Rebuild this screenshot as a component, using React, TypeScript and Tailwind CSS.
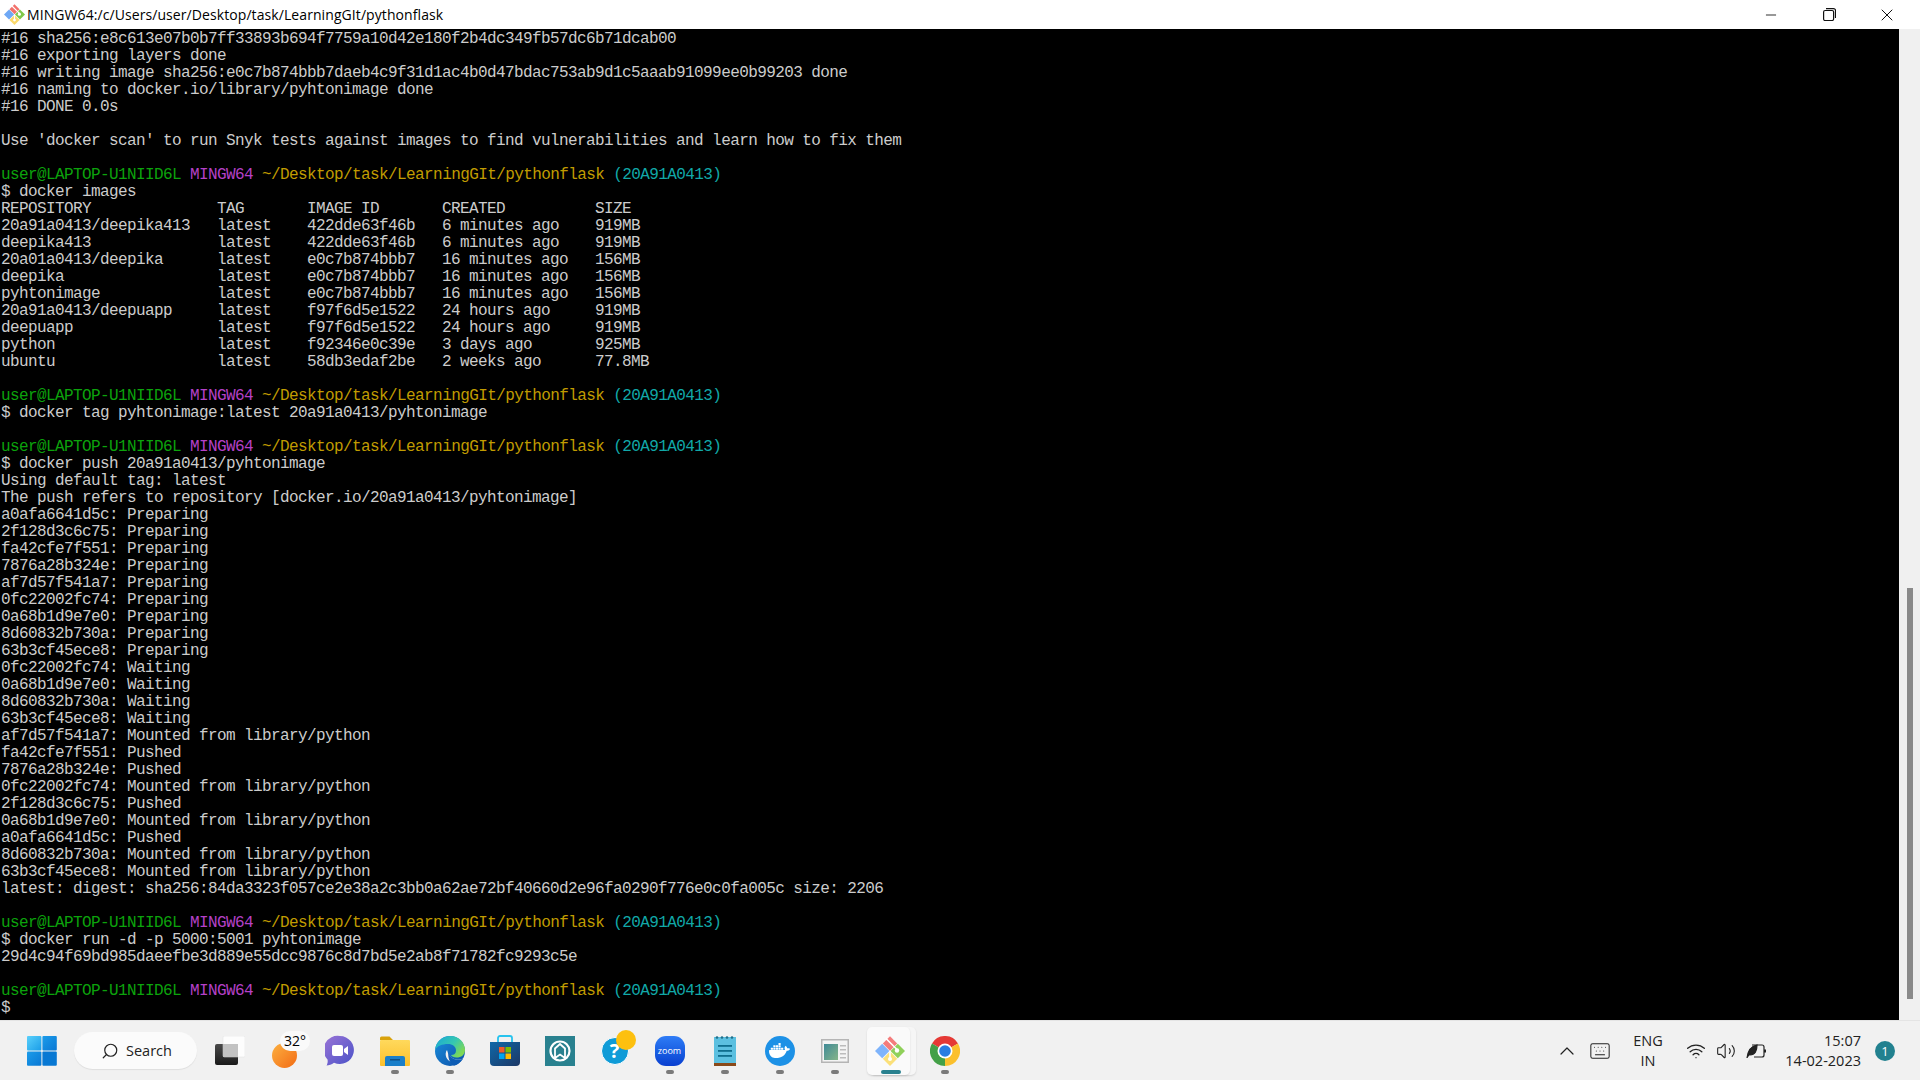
import React from "react";
import { Search, ChevronUp, Wifi, Volume2, Keyboard, Minus, X } from "lucide-react";
import { SiDocker } from "react-icons/si";

const img = (a: string, b: string, c: string, d: string, e: string) =>
  a.padEnd(24) + b.padEnd(10) + c.padEnd(15) + d.padEnd(17) + e;

const PROMPT = "P";
const lines: string[] = [
  "#16 sha256:e8c613e07b0b7ff33893b694f7759a10d42e180f2b4dc349fb57dc6b71dcab00",
  "#16 exporting layers done",
  "#16 writing image sha256:e0c7b874bbb7daeb4c9f31d1ac4b0d47bdac753ab9d1c5aaab91099ee0b99203 done",
  "#16 naming to docker.io/library/pyhtonimage done",
  "#16 DONE 0.0s",
  "",
  "Use 'docker scan' to run Snyk tests against images to find vulnerabilities and learn how to fix them",
  "",
  PROMPT,
  "$ docker images",
  img("REPOSITORY", "TAG", "IMAGE ID", "CREATED", "SIZE"),
  img("20a91a0413/deepika413", "latest", "422dde63f46b", "6 minutes ago", "919MB"),
  img("deepika413", "latest", "422dde63f46b", "6 minutes ago", "919MB"),
  img("20a01a0413/deepika", "latest", "e0c7b874bbb7", "16 minutes ago", "156MB"),
  img("deepika", "latest", "e0c7b874bbb7", "16 minutes ago", "156MB"),
  img("pyhtonimage", "latest", "e0c7b874bbb7", "16 minutes ago", "156MB"),
  img("20a91a0413/deepuapp", "latest", "f97f6d5e1522", "24 hours ago", "919MB"),
  img("deepuapp", "latest", "f97f6d5e1522", "24 hours ago", "919MB"),
  img("python", "latest", "f92346e0c39e", "3 days ago", "925MB"),
  img("ubuntu", "latest", "58db3edaf2be", "2 weeks ago", "77.8MB"),
  "",
  PROMPT,
  "$ docker tag pyhtonimage:latest 20a91a0413/pyhtonimage",
  "",
  PROMPT,
  "$ docker push 20a91a0413/pyhtonimage",
  "Using default tag: latest",
  "The push refers to repository [docker.io/20a91a0413/pyhtonimage]",
  "a0afa6641d5c: Preparing",
  "2f128d3c6c75: Preparing",
  "fa42cfe7f551: Preparing",
  "7876a28b324e: Preparing",
  "af7d57f541a7: Preparing",
  "0fc22002fc74: Preparing",
  "0a68b1d9e7e0: Preparing",
  "8d60832b730a: Preparing",
  "63b3cf45ece8: Preparing",
  "0fc22002fc74: Waiting",
  "0a68b1d9e7e0: Waiting",
  "8d60832b730a: Waiting",
  "63b3cf45ece8: Waiting",
  "af7d57f541a7: Mounted from library/python",
  "fa42cfe7f551: Pushed",
  "7876a28b324e: Pushed",
  "0fc22002fc74: Mounted from library/python",
  "2f128d3c6c75: Pushed",
  "0a68b1d9e7e0: Mounted from library/python",
  "a0afa6641d5c: Pushed",
  "8d60832b730a: Mounted from library/python",
  "63b3cf45ece8: Mounted from library/python",
  "latest: digest: sha256:84da3323f057ce2e38a2c3bb0a62ae72bf40660d2e96fa0290f776e0c0fa005c size: 2206",
  "",
  PROMPT,
  "$ docker run -d -p 5000:5001 pyhtonimage",
  "29d4c94f69bd985daeefbe3d889e55dcc9876c8d7bd5e2ab8f71782fc9293c5e",
  "",
  PROMPT,
  "$",
];

function Prompt() {
  return (
    <>
      <span className="text-[#0ca30c]">user@LAPTOP-U1NIID6L</span>{" "}
      <span className="text-[#b540c8]">MINGW64</span>{" "}
      <span className="text-[#c19c00]">~/Desktop/task/LearningGIt/pythonflask</span>{" "}
      <span className="text-[#11a8a8]">(20A91A0413)</span>
    </>
  );
}

function GitLogo({ size, pastel }: { size: number; pastel?: boolean }) {
  const c = pastel
    ? ["#f47c7c", "#8fd05a", "#fbe07a", "#7fb4fb"]
    : ["#f2706a", "#7fc84a", "#fbd96a", "#6ea8f5"];
  return (
    <svg width={size} height={size} viewBox="0 0 30 30">
      <polygon points="15,0 22.2,7.2 15,14.4 7.8,7.2" fill={c[0]} transform="translate(0 0.3)" />
      <polygon points="22.8,7.8 30,15 22.8,22.2 15.6,15" fill={c[1]} />
      <polygon points="15,15.6 22.2,22.8 15,30 7.8,22.8" fill={c[2]} />
      <polygon points="7.2,7.8 14.4,15 7.2,22.2 0,15" fill={c[3]} />
      <path d="M11 2.5 L22 13.5 M15 15 V23" stroke="#ffffff" strokeWidth="1.6" fill="none" />
      <circle cx="15" cy="23" r="2" fill="#fff" />
      <circle cx="22" cy="14.5" r="2.2" fill="#fff" />
    </svg>
  );
}

function WinLogo() {
  return (
    <svg width="30" height="30" viewBox="0 0 30 30">
      <defs>
        <linearGradient id="wa" x1="0" y1="0" x2="1" y2="1">
          <stop offset="0" stopColor="#5ad0fb" />
          <stop offset="1" stopColor="#1a9de8" />
        </linearGradient>
        <linearGradient id="wb" x1="0" y1="0" x2="1" y2="1">
          <stop offset="0" stopColor="#1b9cea" />
          <stop offset="1" stopColor="#0a78d4" />
        </linearGradient>
      </defs>
      <rect x="0" y="0" width="14.4" height="14.4" rx="1" fill="url(#wa)" />
      <rect x="15.4" y="0" width="14.4" height="14.4" rx="1" fill="url(#wb)" />
      <rect x="0" y="15.4" width="14.4" height="14.4" rx="1" fill="url(#wb)" />
      <rect x="15.4" y="15.4" width="14.4" height="14.4" rx="1" fill="#0878d3" />
    </svg>
  );
}

function TaskView() {
  return (
    <svg width="30" height="30" viewBox="0 0 30 30" className="ml-[1px]">
      <defs>
        <linearGradient id="tv" x1="0" y1="0" x2="0" y2="1">
          <stop offset="0" stopColor="#4a4a4a" />
          <stop offset="1" stopColor="#1a1a1a" />
        </linearGradient>
      </defs>
      <rect x="0" y="8" width="23" height="21" rx="2" fill="url(#tv)" />
      <rect x="8" y="0" width="22" height="21" rx="1.5" fill="#ffffff" fillOpacity="0.85" stroke="#e2e2e2" strokeWidth="0.5" />
      <rect x="8" y="8" width="15" height="13" fill="#c2c2c2" />
    </svg>
  );
}

function Weather() {
  return (
    <div className="relative w-[25px] h-[40px] flex items-end">
      <div className="w-[25px] h-[25px] rounded-full bg-gradient-to-br from-[#fbb040] to-[#f26a10] mb-[3px]" />
      <div className="absolute left-[8px] top-[0px] w-[30px] h-[20px] rounded-full bg-[#fafafa] text-[14px] leading-[20px] text-center text-black font-['Open_Sans',sans-serif]">
        32°
      </div>
    </div>
  );
}

function Chat() {
  return (
    <svg width="30" height="32" viewBox="0 0 30 32">
      <defs>
        <linearGradient id="ch" x1="0" y1="0" x2="1" y2="1">
          <stop offset="0" stopColor="#9a74d6" />
          <stop offset="1" stopColor="#4a52c8" />
        </linearGradient>
      </defs>
      <path d="M15 1a14 14 0 1 1-6 26.7C6.5 29.5 4 30.5 1.5 30.5c1-1.500 1.500-4 1-6A14 14 0 0 1 15 1z" fill="url(#ch)" />
      <rect x="7" y="10" width="11" height="11" rx="2" fill="#fff" />
      <path d="M19 14l4-3v9l-4-3z" fill="#fff" />
    </svg>
  );
}

function Folder() {
  return (
    <svg width="30" height="30" viewBox="0 0 30 30">
      <defs>
        <linearGradient id="fo" x1="0" y1="0" x2="0" y2="1">
          <stop offset="0" stopColor="#ffd95c" />
          <stop offset="1" stopColor="#fbc02d" />
        </linearGradient>
      </defs>
      <path d="M0 2a1.500 1.500 0 0 1 1.500-1.500h8L13 4h-13z" fill="#d9a20b" />
      <rect x="0" y="4" width="30" height="26" rx="1" fill="url(#fo)" />
      <path d="M5 22a2 2 0 0 1 2-2h16a2 2 0 0 1 2 2v8H5z" fill="#1a7fc9" />
      <rect x="10" y="23" width="10" height="1.500" fill="#0d4f86" />
    </svg>
  );
}

function Edge() {
  return (
    <svg width="30" height="30" viewBox="0 0 30 30">
      <defs>
        <linearGradient id="e1" x1="0" y1="0" x2="1" y2="0.6">
          <stop offset="0" stopColor="#18a6d8" />
          <stop offset="0.6" stopColor="#36c8b0" />
          <stop offset="1" stopColor="#7fd855" />
        </linearGradient>
        <linearGradient id="e2" x1="0" y1="0" x2="1" y2="1">
          <stop offset="0" stopColor="#1a8fdc" />
          <stop offset="1" stopColor="#0c4fa8" />
        </linearGradient>
      </defs>
      <circle cx="15" cy="15" r="15" fill="url(#e2)" />
      <path d="M0 14C1 5 8 0 15.500 0 24 0 30 6.500 30 14c0 5-4 7.500-8.500 7.500-2.500 0-5-1-5.500-2.500 3 0 5-1.500 5-4.500C21 10.500 17.500 8 13 8 7 8 2 10 0 14z" fill="url(#e1)" />
      <path d="M12 14c-3 4-1 11 6 12.500 4 .5 8-1 10-4-3 1.500-6 1.500-9 .5-4-1.500-6-5-7-9z" fill="#f0f0f0" />
      <path d="M19 29.700c4-1 7-3.700 9-7-3 1.500-6.500 1.300-9 .3-3-1.300-5-4-5.500-7-1 5 1 11 5.500 13.700z" fill="#0e5db5" />
    </svg>
  );
}

function Store() {
  return (
    <svg width="30" height="32" viewBox="0 0 30 32">
      <defs>
        <linearGradient id="st" x1="0" y1="0" x2="1" y2="1">
          <stop offset="0" stopColor="#0f68a8" />
          <stop offset="1" stopColor="#1d3866" />
        </linearGradient>
      </defs>
      <path d="M8 7V3a2 2 0 0 1 2-2h10a2 2 0 0 1 2 2v4" fill="none" stroke="#27c3ee" strokeWidth="1.800" />
      <path d="M0 7h30v20a4 4 0 0 1-4 4H4a4 4 0 0 1-4-4z" fill="url(#st)" />
      <rect x="9" y="12" width="5.500" height="5.500" fill="#f05a28" />
      <rect x="15.500" y="12" width="5.500" height="5.500" fill="#7cbb00" />
      <rect x="9" y="18.500" width="5.500" height="5.500" fill="#00a4ef" />
      <rect x="15.500" y="18.500" width="5.500" height="5.500" fill="#ffb900" />
    </svg>
  );
}

function Bookmark() {
  return (
    <svg width="30" height="30" viewBox="0 0 30 30">
      <rect width="30" height="30" fill="#29818f" />
      <circle cx="15" cy="15" r="9.500" fill="none" stroke="#fff" strokeWidth="2.200" />
      <path d="M10 22V12.500L15 8l5 4.500V22l-5-3.500z" fill="none" stroke="#fff" strokeWidth="1.800" />
    </svg>
  );
}

function Help() {
  return (
    <div className="relative w-[28px] h-[30px] flex items-center">
      <div className="w-[28px] h-[28px] rounded-full bg-[#0f9bd7] border border-white text-white font-bold text-[20px] leading-[26px] text-center font-['Open_Sans',sans-serif]">
        ?
      </div>
      <div className="absolute left-[15px] top-[-6px] w-[20px] h-[20px] rounded-full bg-[#fdc00f]" />
    </div>
  );
}

function ZoomApp() {
  return (
    <div className="w-[30px] h-[30px] rounded-[11px] bg-gradient-to-b from-[#2f7cf6] to-[#0b3fd0] flex items-center justify-center text-white text-[9px] leading-none font-['Open_Sans',sans-serif]">
      zoom
    </div>
  );
}

function Notepad() {
  return (
    <svg width="22" height="30" viewBox="0 0 22 30">
      <rect x="0" y="1" width="22" height="28" fill="#5cc0e0" />
      <rect x="0" y="27" width="22" height="3" fill="#8a4a1a" />
      <rect x="4" y="9" width="14" height="1.800" fill="#0f6e8e" />
      <rect x="4" y="14" width="14" height="1.800" fill="#0f6e8e" />
      <rect x="4" y="19" width="14" height="1.800" fill="#0f6e8e" />
      {[3, 8, 13, 18].map((x) => (
        <circle key={x} cx={x} cy="1.500" r="1.300" fill="#1f6f8a" />
      ))}
    </svg>
  );
}

function DockerApp() {
  return (
    <div className="w-[30px] h-[30px] rounded-full bg-[#1d91e6] flex items-center justify-center text-white">
      <SiDocker size={21} />
    </div>
  );
}

function Monitor() {
  return (
    <svg width="28" height="24" viewBox="0 0 28 24">
      <rect x="0" y="0" width="28" height="24" fill="#b5b5b5" />
      <rect x="1.500" y="1.500" width="25" height="21" fill="#f4f4f4" />
      <defs>
        <linearGradient id="mo" x1="0" y1="0" x2="1" y2="1">
          <stop offset="0" stopColor="#3f8a96" />
          <stop offset="1" stopColor="#86b58a" />
        </linearGradient>
      </defs>
      <rect x="3" y="5" width="14" height="16" fill="url(#mo)" />
      <rect x="19" y="6" width="6" height="1.500" fill="#bcbcbc" />
      <rect x="19" y="10" width="6" height="1.500" fill="#bcbcbc" />
      <rect x="19" y="14" width="6" height="1.500" fill="#bcbcbc" />
      <rect x="19" y="18" width="6" height="1.500" fill="#bcbcbc" />
    </svg>
  );
}

function Chrome() {
  return (
    <svg width="30" height="30" viewBox="0 0 30 30">
      <path d="M15 15 L2 7.500 A15 15 0 0 1 28 7.500 Z" fill="#e53935" />
      <path d="M15 15 L28 7.500 A15 15 0 0 1 15 30 Z" fill="#fbc02d" />
      <path d="M15 15 L15 30 A15 15 0 0 1 2 7.500 Z" fill="#43a047" />
      <circle cx="15" cy="15" r="7.500" fill="#fff" />
      <circle cx="15" cy="15" r="5.800" fill="#2a7de1" />
    </svg>
  );
}

function Slot({ children, dot }: { children: React.ReactNode; dot?: boolean }) {
  return (
    <div className="relative w-[55px] h-full flex items-center justify-center">
      {children}
      {dot && <div className="absolute bottom-[6px] left-[23.500px] w-[8px] h-[4px] rounded-full bg-[#7a7a7a]" />}
    </div>
  );
}

export default function App() {
  return (
    <div className="w-[1920px] h-[1080px] flex flex-col overflow-hidden bg-[#f0f0f0]">
      {/* title bar */}
      <div className="h-[29px] bg-white flex items-center shrink-0">
        <div className="w-[27px] flex justify-center pl-[1px]">
          <GitLogo size={21} />
        </div>
        <div className="flex-1 text-[14px] leading-[29px] text-black font-['Open_Sans',sans-serif] tracking-[0.08px] whitespace-pre">
          MINGW64:/c/Users/user/Desktop/task/LearningGIt/pythonflask
        </div>
        <div className="flex items-center text-[#111] pr-[4px]">
          <div className="w-[58px] flex justify-center"><Minus size={16} strokeWidth={1.3} /></div>
          <div className="w-[58px] flex justify-center">
            <svg width="13" height="13" viewBox="0 0 13 13" fill="none" stroke="#111" strokeWidth="1.200">
              <rect x="0.6" y="2.500" width="10" height="10" rx="1.500" />
              <path d="M3 .6h7.500a2 2 0 0 1 2 2V10" />
            </svg>
          </div>
          <div className="w-[58px] flex justify-center"><X size={20} strokeWidth={1.2} /></div>
        </div>
      </div>

      {/* terminal + scrollbar */}
      <div className="flex h-[991px] shrink-0">
        <div className="w-[1899px] bg-black pl-[1px] pt-[2px] overflow-hidden font-['Liberation_Mono',monospace] text-[16px] tracking-[-0.6px] leading-[17px] text-[#cccccc]">
          {lines.map((l, i) => (
            <div key={i} className="h-[17px] whitespace-pre">
              {l === PROMPT ? <Prompt /> : l}
            </div>
          ))}
        </div>
        <div className="w-[21px] bg-[#f0f0f0] pt-[559px] pl-[8px]">
          <div className="w-[6px] h-[411px] bg-[#8a8a8a]" />
        </div>
      </div>

      {/* taskbar */}
      <div className="h-[60px] shrink-0 bg-[#f1f1f1] border-t border-[#e4e4e4] flex items-center">
        <div className="ml-[14px] w-[55px] flex justify-center"><WinLogo /></div>
        <div className="ml-[5px] w-[123px] h-[37px] rounded-full bg-[#fbfbfb] shadow-[0_1px_1px_rgba(0,0,0,0.08)] flex items-center justify-center gap-[7px] pl-[2px] text-[#222] text-[14.500px] font-['Open_Sans',sans-serif]">
          <Search size={18} strokeWidth={1.600} className="-scale-x-100" />
          <span>Search</span>
        </div>
        <div className="ml-[5px] flex h-full">
          <Slot><TaskView /></Slot>
          <Slot><Weather /></Slot>
          <Slot><Chat /></Slot>
          <Slot dot><Folder /></Slot>
          <Slot dot><Edge /></Slot>
          <Slot><Store /></Slot>
          <Slot><Bookmark /></Slot>
          <Slot><Help /></Slot>
          <Slot dot><ZoomApp /></Slot>
          <Slot dot><Notepad /></Slot>
          <Slot dot><DockerApp /></Slot>
          <Slot dot><Monitor /></Slot>
          <div className="relative w-[55px] h-full flex items-center justify-center">
            <div className="absolute left-[8px] top-[6px] w-[46px] h-[48px] rounded-[5px] bg-[#f6f6f6] shadow-[0_1px_2px_rgba(0,0,0,0.12)]" />
            <div className="absolute left-[5px] top-[6px] w-[43px] h-[48px] rounded-[5px] bg-[#fafafa] shadow-[0_1px_2px_rgba(0,0,0,0.12)]" />
            <div className="relative"><GitLogo size={30} pastel /></div>
            <div className="absolute bottom-[6px] left-[19px] w-[20px] h-[4px] rounded-full bg-[#29818f]" />
          </div>
          <Slot dot><Chrome /></Slot>
        </div>

        <div className="flex-1" />

        {/* tray */}
        <div className="flex items-center h-full text-[#222] font-['Open_Sans',sans-serif] text-[14.500px]">
          <ChevronUp size={24} strokeWidth={1.200} />
          <div className="ml-[10px]"><Keyboard size={22} strokeWidth={1.100} /></div>
          <div className="ml-[21px] w-[32px] text-center leading-[20px]">
            <div>ENG</div>
            <div>IN</div>
          </div>
          <div className="ml-[22px]"><Wifi size={20} strokeWidth={1.600} /></div>
          <div className="ml-[10px]"><Volume2 size={20} strokeWidth={1.300} /></div>
          <div className="ml-[10px]">
            <svg width="21" height="16" viewBox="0 0 21 16" fill="none" stroke="#222" strokeWidth="1.200">
              <path d="M6 2h10a2 2 0 0 1 2 2v8a2 2 0 0 1-2 2H8" />
              <path d="M19 6.500v3" strokeWidth="2" />
              <path d="M1 15C2 7 5 3 11 2c0 6-2 10-7 10" fill="#222" />
            </svg>
          </div>
          <div className="ml-[13px] w-[81px] text-right leading-[20px]">
            <div>15:07</div>
            <div>14-02-2023</div>
          </div>
          <div className="ml-[14px] mr-[25px] w-[20px] h-[20px] rounded-full bg-[#22818f] text-white text-[13px] leading-[20px] text-center">
            1
          </div>
        </div>
      </div>
    </div>
  );
}
